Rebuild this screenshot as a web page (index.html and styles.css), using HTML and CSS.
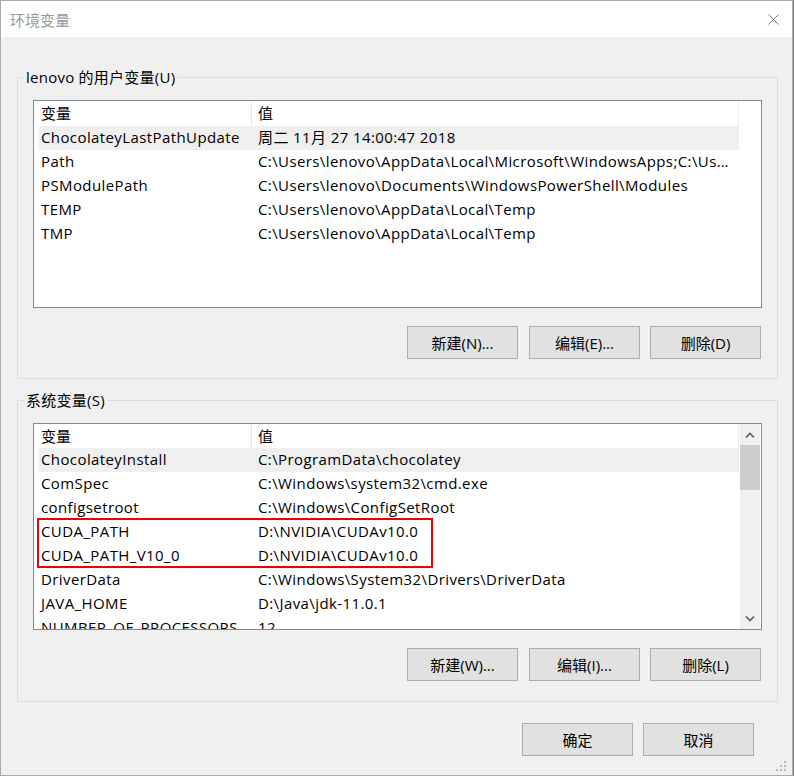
FILE: index.html
```html
<!DOCTYPE html>
<html lang="zh-CN">

<head>
    <meta charset="UTF-8">
    <meta name="viewport" content="width=device-width, initial-scale=1.0">
    <title>环境变量</title>
    <link rel="stylesheet" href="styles.css">
</head>

<body>
    <div class="window">
        <div class="titlebar">
            <span class="title">环境变量</span>
            <svg class="close" width="11" height="11" viewBox="0 0 11 11">
                <path d="M0.5 0.5 L10.5 10.5 M10.5 0.5 L0.5 10.5" stroke="#7a7a7a" stroke-width="1" fill="none" />
            </svg>
        </div>

        <div class="content">
            <!-- User variables -->
            <fieldset class="group">
                <legend>lenovo 的用户变量(U)</legend>
                <div class="list">
                    <div class="grid">
                        <div class="row head">
                            <div class="name">变量</div>
                            <div class="value">值</div>
                        </div>
                        <div class="row selected">
                            <div class="name">ChocolateyLastPathUpdate</div>
                            <div class="value">周二 11月 27 14:00:47 2018</div>
                        </div>
                        <div class="row">
                            <div class="name">Path</div>
                            <div class="value">C:\Users\lenovo\AppData\Local\Microsoft\WindowsApps;C:\Users\lenovo\AppData\Roaming\npm</div>
                        </div>
                        <div class="row">
                            <div class="name">PSModulePath</div>
                            <div class="value">C:\Users\lenovo\Documents\WindowsPowerShell\Modules</div>
                        </div>
                        <div class="row">
                            <div class="name">TEMP</div>
                            <div class="value">C:\Users\lenovo\AppData\Local\Temp</div>
                        </div>
                        <div class="row">
                            <div class="name">TMP</div>
                            <div class="value">C:\Users\lenovo\AppData\Local\Temp</div>
                        </div>
                    </div>
                    <div class="side"></div>
                </div>
                <div class="buttons">
                    <button class="btn">新建(N)...</button>
                    <button class="btn">编辑(E)...</button>
                    <button class="btn">删除(D)</button>
                </div>
            </fieldset>

            <!-- System variables -->
            <fieldset class="group system">
                <legend>系统变量(S)</legend>
                <div class="list">
                    <div class="grid">
                        <div class="row head">
                            <div class="name">变量</div>
                            <div class="value">值</div>
                        </div>
                        <div class="row selected">
                            <div class="name">ChocolateyInstall</div>
                            <div class="value">C:\ProgramData\chocolatey</div>
                        </div>
                        <div class="row">
                            <div class="name">ComSpec</div>
                            <div class="value">C:\Windows\system32\cmd.exe</div>
                        </div>
                        <div class="row">
                            <div class="name">configsetroot</div>
                            <div class="value">C:\Windows\ConfigSetRoot</div>
                        </div>
                        <div class="row">
                            <div class="name">CUDA_PATH</div>
                            <div class="value">D:\NVIDIA\CUDAv10.0</div>
                        </div>
                        <div class="row">
                            <div class="name">CUDA_PATH_V10_0</div>
                            <div class="value">D:\NVIDIA\CUDAv10.0</div>
                        </div>
                        <div class="row">
                            <div class="name">DriverData</div>
                            <div class="value">C:\Windows\System32\Drivers\DriverData</div>
                        </div>
                        <div class="row">
                            <div class="name">JAVA_HOME</div>
                            <div class="value">D:\Java\jdk-11.0.1</div>
                        </div>
                        <div class="row">
                            <div class="name">NUMBER_OF_PROCESSORS</div>
                            <div class="value">12</div>
                        </div>
                    </div>
                    <div class="scrollbar">
                        <div class="arrow">
                            <svg width="10" height="6" viewBox="0 0 10 6">
                                <path d="M1 5.5 L5 1.5 L9 5.5" stroke="#606060" stroke-width="1.6" fill="none" />
                            </svg>
                        </div>
                        <div class="thumb"></div>
                        <div class="track"></div>
                        <div class="arrow">
                            <svg width="10" height="6" viewBox="0 0 10 6">
                                <path d="M1 0.5 L5 4.5 L9 0.5" stroke="#606060" stroke-width="1.6" fill="none" />
                            </svg>
                        </div>
                    </div>
                    <div class="highlight"></div>
                </div>
                <div class="buttons">
                    <button class="btn">新建(W)...</button>
                    <button class="btn">编辑(I)...</button>
                    <button class="btn">删除(L)</button>
                </div>
            </fieldset>

            <div class="footer">
                <button class="btn">确定</button>
                <button class="btn">取消</button>
            </div>
        </div>

        <svg class="grip" width="12" height="12" viewBox="0 0 12 12">
            <rect x="8" y="0" width="2" height="2" fill="#b8b8b8" />
            <rect x="4" y="4" width="2" height="2" fill="#b8b8b8" />
            <rect x="8" y="4" width="2" height="2" fill="#b8b8b8" />
            <rect x="0" y="8" width="2" height="2" fill="#b8b8b8" />
            <rect x="4" y="8" width="2" height="2" fill="#b8b8b8" />
            <rect x="8" y="8" width="2" height="2" fill="#b8b8b8" />
        </svg>
    </div>
</body>

</html>
```

FILE: styles.css
```css
/* Reset */
* {
    margin: 0;
    padding: 0;
    box-sizing: border-box;
}

body {
    background: #7d7d7d;
    font-family: "Open Sans", "Noto Sans CJK SC", sans-serif;
    font-size: 15px;
    color: #000;
    width: 794px;
    height: 776px;
    overflow: hidden;
}

/* Window frame */
.window {
    position: relative;
    width: 793px;
    height: 776px;
    border: 1px solid #aaaaaa;
    display: flex;
    flex-direction: column;
    background: #f0f0f0;
}

.titlebar {
    height: 36px;
    background: #fff;
    display: flex;
    align-items: center;
    justify-content: space-between;
    padding: 0 13px 0 9px;
}

.title {
    color: #9a9a9a;
    font-size: 15px;
}

.close {
    display: block;
}

/* Content */
.content {
    flex: 1;
    padding: 30px 14px 0 16px;
}

.group {
    border: 1px solid #dcdcdc;
    padding: 13px 15px 19px 15px;
    margin: 0;
}

.group legend {
    margin-left: -9px;
    padding: 0 2px;
    line-height: 20px;
    font-size: 15px;
    letter-spacing: 0.25px;
}

.group.system {
    margin-top: 11px;
    padding-bottom: 20px;
}

/* List view */
.list {
    position: relative;
    height: 208px;
    border: 1px solid #828790;
    background: #fff;
    display: flex;
    padding-left: 5px;
    overflow: hidden;
}

.group.system .list {
    height: 207px;
}

.grid {
    width: 700px;
    overflow: hidden;
}

.side {
    flex: 1;
}

.row {
    display: flex;
    height: 24px;
    line-height: 23px;
    white-space: nowrap;
    letter-spacing: 0.4px;
}

.row .name {
    width: 213px;
    padding-left: 2px;
    overflow: hidden;
}

.row .value {
    flex: 1;
    padding: 0 8px 0 6px;
    overflow: hidden;
    text-overflow: ellipsis;
}

.row.head {
    height: 25px;
    line-height: 25px;
    letter-spacing: 0;
    border-right: 1px solid #ececec;
}

.group.system .row.head {
    height: 24px;
    line-height: 24px;
}

.row.head .name {
    border-right: 1px solid #e5e5e5;
}

.row.selected {
    background: #efefef;
}

/* Scrollbar */
.scrollbar {
    width: 20px;
    margin: 0 1px;
    background: #f0f0f0;
    display: flex;
    flex-direction: column;
}

.scrollbar .arrow {
    height: 21px;
    display: flex;
    align-items: center;
    justify-content: center;
}

.scrollbar .thumb {
    height: 45px;
    background: #cdcdcd;
}

.scrollbar .track {
    flex: 1;
}

.highlight {
    position: absolute;
    left: 3px;
    top: 94px;
    width: 396px;
    height: 50px;
    border: 2px solid #f00000;
}

/* Buttons */
.buttons {
    display: flex;
    justify-content: flex-end;
    gap: 10px;
    margin-top: 18px;
    padding-right: 1px;
}

.buttons .btn:first-child {
    margin-right: 1px;
}

.btn {
    width: 111px;
    height: 33px;
    background: #e1e1e1;
    border: 1px solid #adadad;
    font-family: "Open Sans", "Noto Sans CJK SC", sans-serif;
    font-size: 15px;
    color: #000;
}

.footer {
    display: flex;
    justify-content: flex-end;
    gap: 10px;
    margin-top: 21px;
    padding-right: 24px;
}

.grip {
    position: absolute;
    right: 4px;
    bottom: 2px;
}
```
